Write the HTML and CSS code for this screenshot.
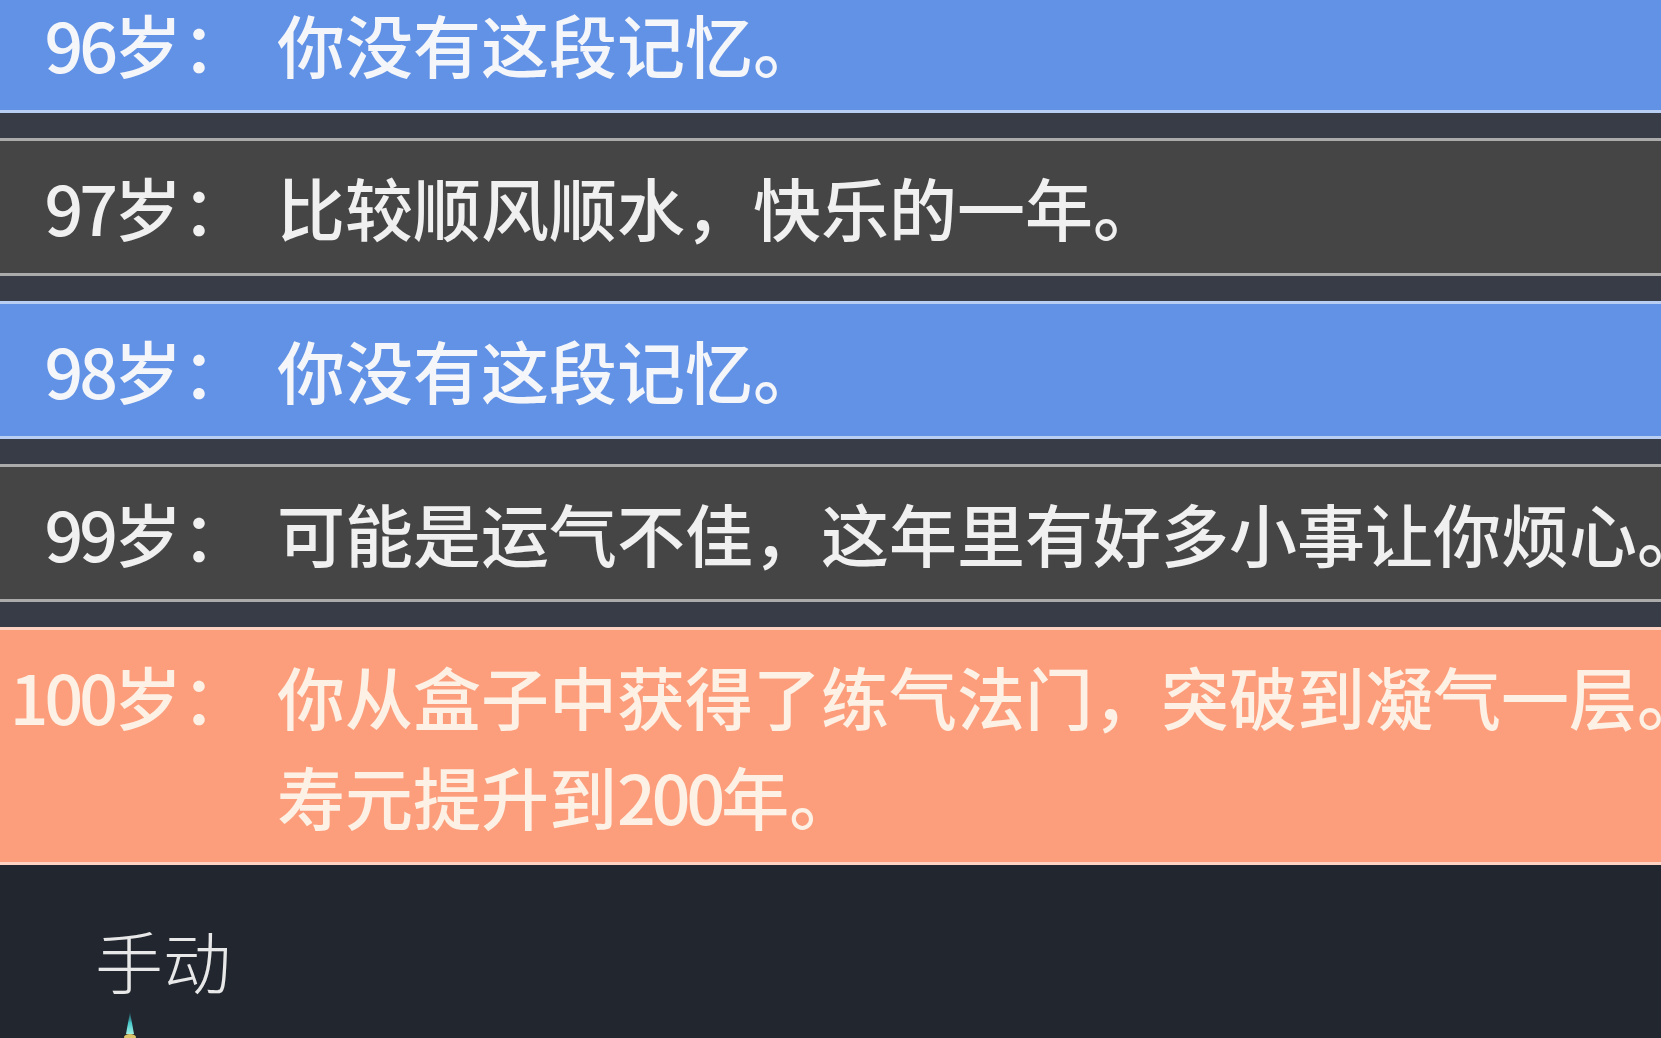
FILE: index.html
```html
<!DOCTYPE html>
<html lang="zh-CN">

<head>
    <meta charset="UTF-8">
    <meta name="viewport" content="width=device-width, initial-scale=1.0">
    <title>人生记录</title>
    <link rel="stylesheet" href="styles.css">
</head>

<body>
    <div class="log">
        <div class="entry entry-blank">
            <div class="age"><span class="num">96</span>岁：</div>
            <div class="event">你没有这段记忆。</div>
        </div>
        <div class="entry entry-normal">
            <div class="age"><span class="num">97</span>岁：</div>
            <div class="event">比较顺风顺水，快乐的一年。</div>
        </div>
        <div class="entry entry-blank">
            <div class="age"><span class="num">98</span>岁：</div>
            <div class="event">你没有这段记忆。</div>
        </div>
        <div class="entry entry-normal">
            <div class="age"><span class="num">99</span>岁：</div>
            <div class="event">可能是运气不佳，这年里有好多小事让你烦心。</div>
        </div>
        <div class="entry entry-special">
            <div class="age"><span class="num">100</span>岁：</div>
            <div class="event">你从盒子中获得了练气法门，突破到凝气一层。<br>寿元提升到<span class="num">200</span>年。</div>
        </div>
    </div>

    <div class="controls">
        <div class="mode">手动</div>
        <svg class="mode-icon" width="14" height="26" viewBox="0 0 14 26">
            <defs>
                <linearGradient id="spike" x1="0" y1="0" x2="0" y2="1">
                    <stop offset="0" stop-color="#2f8f9a" stop-opacity="0.3"/>
                    <stop offset="0.5" stop-color="#48c9cc"/>
                    <stop offset="1" stop-color="#9ff0e2"/>
                </linearGradient>
            </defs>
            <path d="M7 0 L11 22 L3 22 Z" fill="url(#spike)"/>
            <ellipse cx="7" cy="25" rx="6" ry="3" fill="#d9c46a"/>
        </svg>
    </div>
</body>

</html>
```

FILE: styles.css
```css
* {
    margin: 0;
    padding: 0;
    box-sizing: border-box;
}

body {
    background-color: #21262f;
    font-family: "Noto Sans CJK SC", "Noto Sans", sans-serif;
    overflow: hidden;
}

.log {
    display: flex;
    flex-direction: column;
    gap: 25px;
    margin-top: -25px;
    background-color: #373c46;
    overflow: hidden;
}

.entry {
    display: grid;
    grid-template-columns: 250px 1fr;
    column-gap: 27px;
    padding: 16px 0;
    border-top: 3px solid rgba(255, 255, 255, 0.55);
    border-bottom: 3px solid rgba(255, 255, 255, 0.55);
    font-size: 68px;
    font-weight: 500;
    line-height: 100px;
    color: #f4f6fa;
}

.entry-blank {
    background-color: #6292e5;
}

.entry-normal {
    background-color: #454545;
    color: #f0f0f0;
}

.entry-special {
    background-color: #fc9e7c;
    color: #fdf0e4;
}

.age {
    text-align: right;
    white-space: nowrap;
}

/* digits in this font run wide, pull them together a bit */
.num {
    letter-spacing: -4px;
}

.event {
    white-space: nowrap;
}

.controls {
    padding: 49px 0 0 95px;
}

.mode {
    font-size: 68px;
    line-height: 92px;
    font-weight: 300;
    color: #e8e8e8;
}

.mode-icon {
    display: block;
    margin: 6px 0 0 28px;
}
```
